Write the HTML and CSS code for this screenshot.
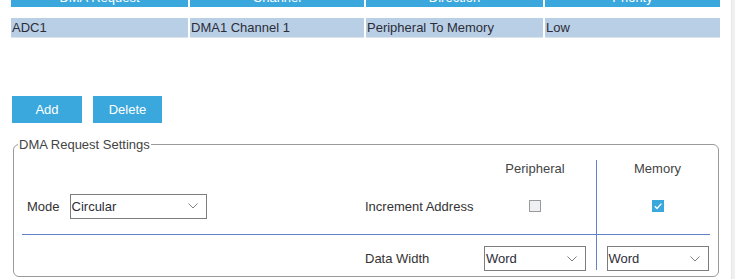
FILE: index.html
```html
<!DOCTYPE html>
<html lang="en">
<head>
  <meta charset="UTF-8">
  <meta name="viewport" content="width=device-width, initial-scale=1.0">
  <title>DMA Settings</title>
  <link rel="stylesheet" href="styles.css">
</head>
<body>
  <div class="page">
    <main class="panel">
      <div class="req-table">
        <div class="th">DMA Request</div>
        <div class="th">Channel</div>
        <div class="th">Direction</div>
        <div class="th">Priority</div>

        <div class="td">ADC1</div>
        <div class="td">DMA1 Channel 1</div>
        <div class="td">Peripheral To Memory</div>
        <div class="td">Low</div>
      </div>

      <div class="actions">
        <button class="btn btn-add">Add</button>
        <button class="btn btn-delete">Delete</button>
      </div>

      <fieldset class="settings">
        <legend>DMA Request Settings</legend>
        <div class="settings-grid">
          <div class="col-head col-per">Peripheral</div>
          <div class="vsep"></div>
          <div class="col-head col-mem">Memory</div>

          <div class="mode">
            <span class="mode-label">Mode</span>
            <div class="combo combo-mode">
              <span>Circular</span>
              <svg width="10" height="6" viewBox="0 0 10 6"><polyline points="0.5,0.5 5,5 9.5,0.5" fill="none" stroke="#808080" stroke-width="1"/></svg>
            </div>
          </div>
          <div class="lbl lbl-inc">Increment Address</div>
          <div class="cell col-per row-inc"><span class="check"></span></div>
          <div class="cell col-mem row-inc">
            <span class="check on">
              <svg width="12" height="12" viewBox="0 0 12 12"><polyline points="2.8,6.2 5,8.4 9.4,3.6" fill="none" stroke="#ffffff" stroke-width="1.4"/></svg>
            </span>
          </div>

          <div class="hsep"></div>

          <div class="lbl lbl-dw">Data Width</div>
          <div class="cell col-per row-dw">
            <div class="combo combo-dw">
              <span>Word</span>
              <svg width="10" height="6" viewBox="0 0 10 6"><polyline points="0.5,0.5 5,5 9.5,0.5" fill="none" stroke="#808080" stroke-width="1"/></svg>
            </div>
          </div>
          <div class="cell col-mem row-dw">
            <div class="combo combo-dw">
              <span>Word</span>
              <svg width="10" height="6" viewBox="0 0 10 6"><polyline points="0.5,0.5 5,5 9.5,0.5" fill="none" stroke="#808080" stroke-width="1"/></svg>
            </div>
          </div>
        </div>
      </fieldset>
    </main>
    <div class="scrollbar"></div>
  </div>
</body>
</html>
```

FILE: styles.css
```css
body {
  margin: 0;
  padding: 0;
  font-family: 'Liberation Sans', Arial, sans-serif;
  font-size: 13px;
  color: #333;
  background: white;
  overflow: hidden;
}

.page {
  display: flex;
  height: 279px;
  overflow: hidden;
}

.panel {
  width: 731px;
  padding: 0 11px;
  box-sizing: border-box;
}

.scrollbar {
  width: 4px;
  background: #f0f0f0;
  border-left: 1px solid #e6e6e6;
}

/* Tableau des requêtes */
.req-table {
  display: grid;
  grid-template-columns: 177px 174px 177px 175px;
  column-gap: 2px;
  margin-top: -12px;
}

.th {
  height: 19px;
  line-height: 19px;
  background: #3aa8dc;
  color: white;
  text-align: center;
  margin-bottom: 11px;
}

.td {
  height: 19px;
  line-height: 19px;
  padding-left: 1px;
  background: #b8cfe6;
  color: #2d2d38;
  border-bottom: 1px solid #dbe3ec;
}

/* Boutons */
.actions {
  display: flex;
  gap: 11px;
  margin-top: 58px;
  padding-left: 1px;
}

.btn {
  height: 27px;
  border: none;
  background: #3aa8dc;
  color: white;
  font-family: inherit;
  font-size: 13px;
  padding: 0;
  cursor: pointer;
}

.btn-add {
  width: 70px;
}

.btn-delete {
  width: 69px;
}

/* Réglages */
.settings {
  margin: 14px 1px 0 2px;
  padding: 8px 0 5px 8px;
  border: 1px solid #9a9a9a;
  border-radius: 6px;
}

.settings legend {
  margin-left: -4px;
  padding: 0 1px;
  color: #444;
  line-height: 15px;
}

.settings-grid {
  display: grid;
  grid-template-columns: 343px 109px 122px 1px 121px;
  grid-template-rows: 18px 56px 1px 11px 25px;
}

.col-head {
  grid-row: 1;
  text-align: center;
  line-height: 18px;
  color: #444;
}

.col-per {
  grid-column: 3;
}

.col-mem {
  grid-column: 5;
}

.vsep {
  grid-column: 4;
  grid-row: 1 / 6;
  background: #6183c4;
  margin-bottom: 1px;
}

.hsep {
  grid-column: 1 / 6;
  grid-row: 3;
  background: #6183c4;
  margin-right: 8px;
}

.mode {
  grid-column: 1;
  grid-row: 2;
  display: flex;
  align-items: center;
  padding-left: 5px;
}

.mode-label {
  margin-right: 10px;
}

.lbl {
  grid-column: 2;
  align-self: center;
}

.lbl-inc {
  grid-row: 2;
}

.lbl-dw {
  grid-row: 5;
}

.cell {
  display: flex;
  justify-content: center;
  align-items: center;
}

.row-inc {
  grid-row: 2;
}

.row-dw {
  grid-row: 5;
}

.combo {
  height: 25px;
  box-sizing: border-box;
  border: 1px solid #7d7d7d;
  display: flex;
  align-items: center;
  justify-content: space-between;
  padding: 0 8px 0 1px;
  background: white;
  color: #2d2d38;
}

.combo-mode {
  width: 137px;
}

.combo-dw {
  width: 102px;
}

.check {
  width: 12px;
  height: 12px;
  box-sizing: border-box;
  border: 1px solid #9a9a9a;
  background: #eef0f3;
  display: block;
}

.check.on {
  border: none;
  background: #3aa8dc;
}

.check.on svg {
  display: block;
}
```
